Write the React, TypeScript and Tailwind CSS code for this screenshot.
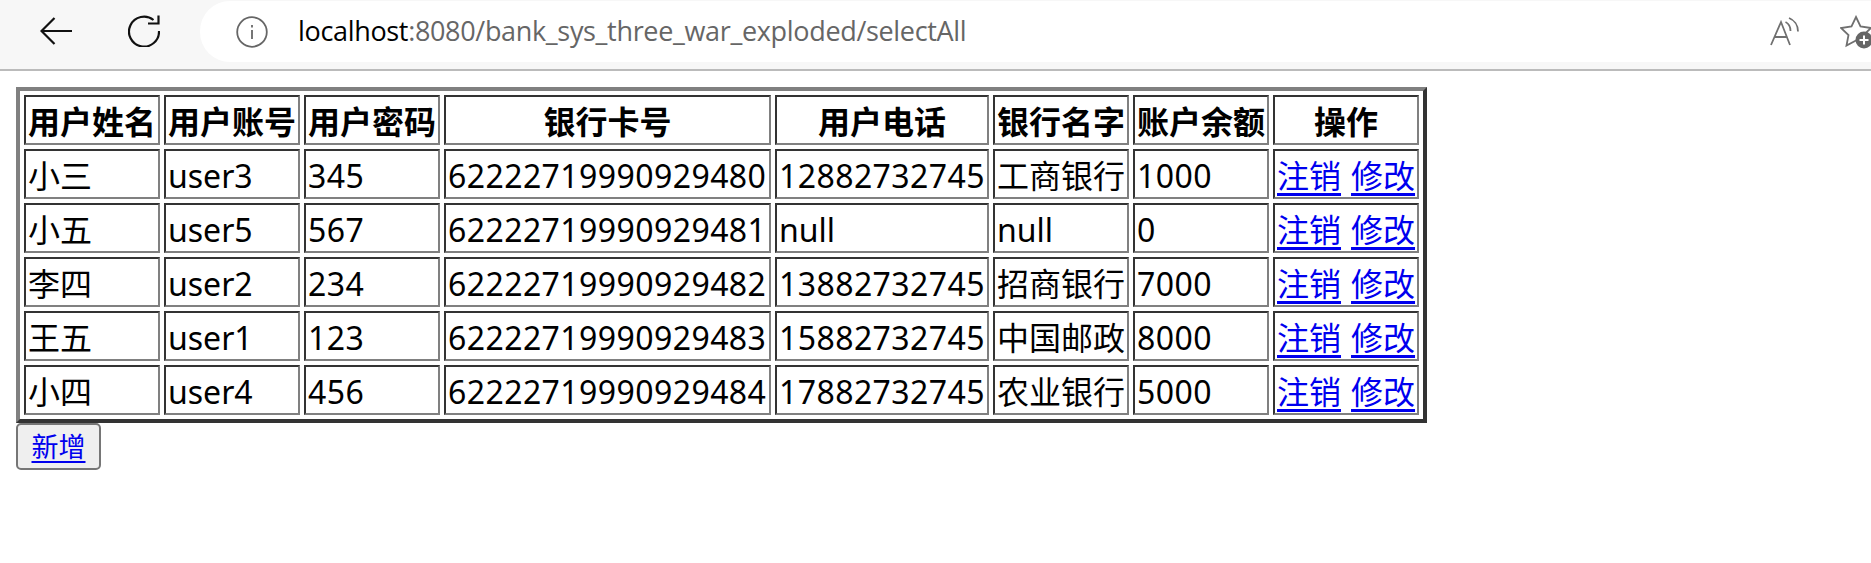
const rows = [
  ['小三', 'user3', '345', '62222719990929480', '12882732745', '工商银行', '1000'],
  ['小五', 'user5', '567', '62222719990929481', 'null', 'null', '0'],
  ['李四', 'user2', '234', '62222719990929482', '13882732745', '招商银行', '7000'],
  ['王五', 'user1', '123', '62222719990929483', '15882732745', '中国邮政', '8000'],
  ['小四', 'user4', '456', '62222719990929484', '17882732745', '农业银行', '5000'],
];

const headers = ['用户姓名', '用户账号', '用户密码', '银行卡号', '用户电话', '银行名字', '账户余额', '操作'];
const widths = ['w-[136px]', 'w-[136px]', 'w-[136px]', 'w-[327px]', 'w-[214px]', 'w-[136px]', 'w-[136px]', 'w-[146px]'];

const cellBorder = 'border-2 border-t-[#333333] border-l-[#333333] border-r-[#808080] border-b-[#808080] p-0 pt-[4px] h-[50px] overflow-hidden';

function AddressBar() {
  return (
    <div className="flex h-[71px] bg-[#f7f7f7] border-b-2 border-[#bbbbbb] font-['Open_Sans','Noto_Sans',sans-serif]">
      <div className="flex items-center w-[200px] h-[61px] pl-10 gap-14 shrink-0">
        <svg width="32" height="28" viewBox="0 0 32 28" fill="none" stroke="#111111" strokeWidth="2.2">
          <path d="M32 14H2M14.5 1 1.5 14l13 13" />
        </svg>
        <svg width="32" height="32" viewBox="0 0 32 32" fill="none" stroke="#111111" strokeWidth="2.2">
          <path d="M25.500 5A15 15 0 1 0 31 16" />
          <path d="M20 8.500H30.500V0.500" />
        </svg>
      </div>
      <div className="flex flex-1 items-center h-[61px] mt-px bg-white rounded-l-[30px] pl-9 relative overflow-hidden">
        <svg width="32" height="32" viewBox="0 0 32 32" fill="none" stroke="#666666" strokeWidth="1.8" className="shrink-0">
          <circle cx="16" cy="16" r="14.8" />
          <path d="M16 14v9M16 9v2.4" />
        </svg>
        <span className="ml-[30px] text-[27px] tracking-[-0.33px] text-[#666666] whitespace-nowrap">
          <span className="text-black">localhost</span>:8080/bank_sys_three_war_exploded/selectAll
        </span>
        <div className="ml-auto flex items-center gap-10 w-[101px] shrink-0">
          <svg width="30" height="30" viewBox="0 0 30 30" fill="none" stroke="#707070" strokeWidth="1.8" className="shrink-0">
            <path d="M1 28 11 5l9 23M4.5 20h13" />
            <path d="M15.500 5c3 1.500 5 5 5 9M19 1c5 2 9 7 9 13.500" />
          </svg>
          <svg width="32" height="34" viewBox="0 0 32 34" fill="none" className="shrink-0">
            <path d="M16 2l4.500 9.500 10.500 1.500-7.500 7 2 10.500L16 25.500 6.500 30.500l2-10.500L1 13l10.500-1.500z" stroke="#707070" strokeWidth="1.8" />
            <circle cx="24" cy="25" r="8.500" fill="#666666" />
            <path d="M24 20.500v9M19.500 25h9" stroke="white" strokeWidth="2" />
          </svg>
        </div>
      </div>
    </div>
  );
}

export default function App() {
  return (
    <div className="w-[1871px] h-[563px] bg-white overflow-hidden font-['Noto_Sans','Noto_Sans_CJK_SC',sans-serif] text-black">
      <AddressBar />
      <div className="pl-4 pt-4">
        <table className="table-fixed border-separate border-spacing-1 border-4 border-t-[#808080] border-l-[#808080] border-r-[#333333] border-b-[#333333] w-[1411px] text-[32px] leading-[42px]">
          <thead>
            <tr>
              {headers.map((h, i) => (
                <th key={h} className={`${cellBorder} ${widths[i]} font-bold text-center whitespace-nowrap`}>{h}</th>
              ))}
            </tr>
          </thead>
          <tbody>
            {rows.map((row) => (
              <tr key={row[3]}>
                {row.map((v, i) => (
                  <td key={i} className={`${cellBorder} pl-0.5 whitespace-nowrap ${/^\d+$/.test(v) ? 'tracking-[0.42px]' : ''}`}>{v}</td>
                ))}
                <td className={`${cellBorder} pl-0.5 whitespace-nowrap`}>
                  <a href="#" className="text-[#0000ee] underline underline-offset-[5px]">注销</a>
                  <a href="#" className="text-[#0000ee] underline underline-offset-[5px] ml-2.5">修改</a>
                </td>
              </tr>
            ))}
          </tbody>
        </table>
        <button className="flex items-center justify-center w-[85px] h-[47px] bg-[#efefef] border-2 border-[#767676] rounded-[5px]">
          <a href="#" className="text-[27px] leading-none text-[#0000ee] underline underline-offset-[4px]">新增</a>
        </button>
      </div>
    </div>
  );
}
